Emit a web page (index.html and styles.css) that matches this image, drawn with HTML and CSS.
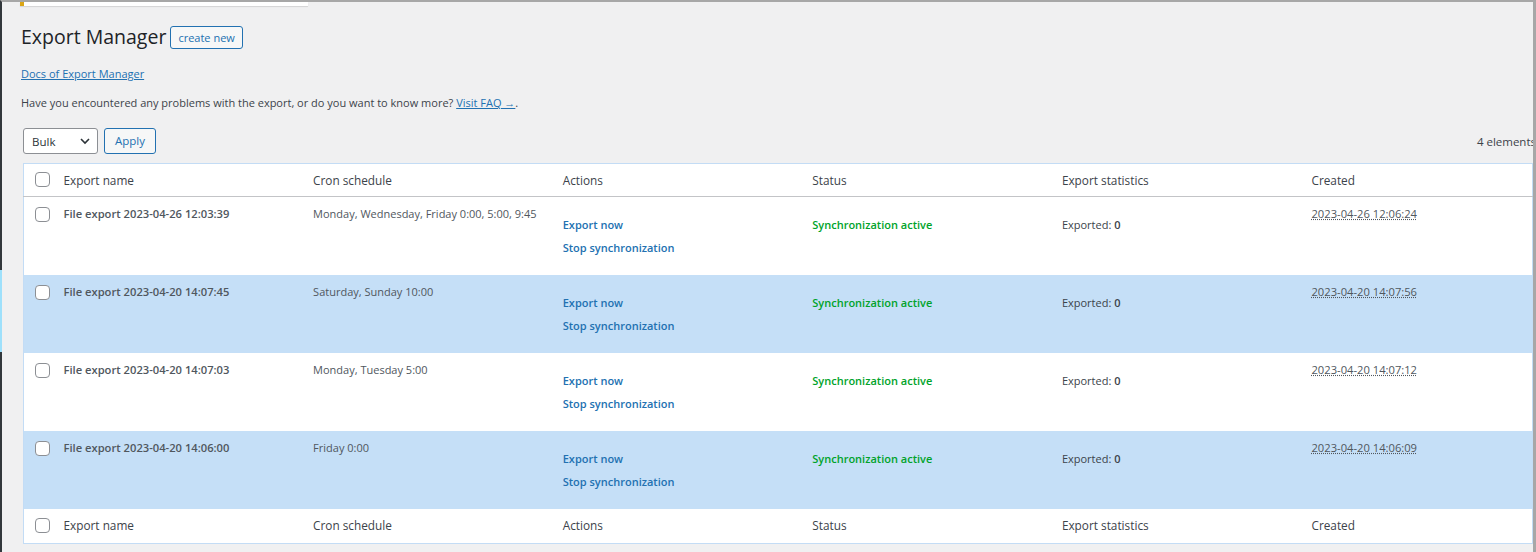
FILE: index.html
```html
<!DOCTYPE html>
<html lang="en">
<head>
    <meta charset="UTF-8">
    <meta name="viewport" content="width=device-width, initial-scale=1.0">
    <title>Export Manager</title>
    <link rel="stylesheet" href="styles.css">
</head>
<body>
    <div class="edge-mark"></div>
    <div class="frame">
        <div class="wrap">
            <div class="notice"></div>
            <div class="heading">
                <h1>Export Manager</h1>
                <a href="#" class="btn">create new</a>
            </div>
            <p class="docs"><a href="#">Docs of Export Manager</a></p>
            <p class="info">Have you encountered any problems with the export, or do you want to know more? <a href="#">Visit FAQ &rarr;</a>.</p>
            <div class="tablenav">
                <div class="bulk">
                    <div class="select">
                        <span>Bulk</span>
                        <svg width="12" height="12" viewBox="0 0 12 12"><path d="M2 4 L6 8 L10 4" fill="none" stroke="#2c3338" stroke-width="1.6"/></svg>
                    </div>
                    <a href="#" class="btn apply">Apply</a>
                </div>
                <span class="count">4 elements</span>
            </div>
            <table class="list">
                <thead>
                    <tr>
                        <td class="check"><span class="box"></span></td>
                        <th class="col">Export name</th>
                        <th class="col">Cron schedule</th>
                        <th class="col">Actions</th>
                        <th class="col">Status</th>
                        <th class="col">Export statistics</th>
                        <th>Created</th>
                    </tr>
                </thead>
                <tbody>
                    <tr>
                        <td class="check"><span class="box"></span></td>
                        <td class="name">File export 2023-04-26 12:03:39</td>
                        <td>Monday, Wednesday, Friday 0:00, 5:00, 9:45</td>
                        <td class="actions"><a href="#">Export now</a><a href="#">Stop synchronization</a></td>
                        <td class="status">Synchronization active</td>
                        <td class="stats">Exported: <b>0</b></td>
                        <td><abbr>2023-04-26 12:06:24</abbr></td>
                    </tr>
                    <tr class="hl">
                        <td class="check"><span class="box"></span></td>
                        <td class="name">File export 2023-04-20 14:07:45</td>
                        <td>Saturday, Sunday 10:00</td>
                        <td class="actions"><a href="#">Export now</a><a href="#">Stop synchronization</a></td>
                        <td class="status">Synchronization active</td>
                        <td class="stats">Exported: <b>0</b></td>
                        <td><abbr>2023-04-20 14:07:56</abbr></td>
                    </tr>
                    <tr>
                        <td class="check"><span class="box"></span></td>
                        <td class="name">File export 2023-04-20 14:07:03</td>
                        <td>Monday, Tuesday 5:00</td>
                        <td class="actions"><a href="#">Export now</a><a href="#">Stop synchronization</a></td>
                        <td class="status">Synchronization active</td>
                        <td class="stats">Exported: <b>0</b></td>
                        <td><abbr>2023-04-20 14:07:12</abbr></td>
                    </tr>
                    <tr class="hl">
                        <td class="check"><span class="box"></span></td>
                        <td class="name">File export 2023-04-20 14:06:00</td>
                        <td>Friday 0:00</td>
                        <td class="actions"><a href="#">Export now</a><a href="#">Stop synchronization</a></td>
                        <td class="status">Synchronization active</td>
                        <td class="stats">Exported: <b>0</b></td>
                        <td><abbr>2023-04-20 14:06:09</abbr></td>
                    </tr>
                </tbody>
                <tfoot>
                    <tr>
                        <td class="check"><span class="box"></span></td>
                        <th>Export name</th>
                        <th>Cron schedule</th>
                        <th>Actions</th>
                        <th>Status</th>
                        <th>Export statistics</th>
                        <th>Created</th>
                    </tr>
                </tfoot>
            </table>
        </div>
    </div>
</body>
</html>
```

FILE: styles.css
```css
* {
    margin: 0;
    padding: 0;
    box-sizing: border-box;
}
body {
    position: relative;
    background-color: #f0f0f1;
    color: #3c434a;
    font-family: 'Open Sans', sans-serif;
    font-size: 11px;
}
a {
    color: #2271b1;
}
.frame {
    height: 552px;
    border-top: 2px solid #a7a7a7;
    border-left: 2px solid #32373c;
    border-right: 3px solid #a7a7a7;
    overflow: hidden;
}
.edge-mark {
    position: absolute;
    left: 0;
    top: 270px;
    width: 2px;
    height: 82px;
    background-color: #9ee0fb;
}
.wrap {
    padding-left: 18px;
}
.notice {
    width: 288px;
    height: 4px;
    background-color: #fff;
    border-left: 4px solid #dba617;
    box-shadow: 0 1px 1px rgba(0, 0, 0, 0.12);
}
.heading {
    display: flex;
    align-items: center;
    gap: 4px;
    margin-top: 17px;
    padding-left: 1px;
}
h1 {
    font-size: 19.5px;
    font-weight: 400;
    color: #1d2327;
    line-height: 28px;
}
.btn {
    display: inline-block;
    color: #2271b1;
    border: 1px solid #2271b1;
    border-radius: 3px;
    background-color: #f6f7f7;
    text-decoration: none;
    font-size: 11px;
    line-height: 21px;
    padding: 0 7px;
}
.docs {
    margin-top: 15px;
    padding-left: 1px;
}
.info {
    margin-top: 14px;
    padding-left: 1px;
}
.tablenav {
    display: flex;
    align-items: center;
    justify-content: space-between;
    margin-top: 18px;
    padding-left: 3px;
    height: 26px;
}
.bulk {
    display: flex;
    gap: 6px;
}
.select {
    width: 75px;
    height: 26px;
    border: 1px solid #8c8f94;
    border-radius: 3px;
    background-color: #fff;
    display: flex;
    align-items: center;
    justify-content: space-between;
    padding: 0 6px 0 8px;
    color: #2c3338;
    font-size: 11.5px;
}
.apply {
    line-height: 24px;
    padding: 0 10px;
    font-size: 11.5px;
}
.count {
    margin-right: -3px;
    color: #3c434a;
    font-size: 11.5px;
}
.list {
    margin-top: 9px;
    margin-left: 3px;
    width: 1510px;
    border-collapse: collapse;
    border: 1px solid #c3dcf5;
    background-color: #fff;
    table-layout: fixed;
}
.list th, .list td {
    text-align: left;
    vertical-align: top;
    font-weight: 400;
    padding: 8px 8px;
    line-height: 16px;
}
.list thead tr {
    height: 32px;
}
.list thead th {
    padding-top: 8px;
}
.list tfoot tr {
    height: 35px;
}
.list thead th, .list thead td {
    border-bottom: 1px solid #c3c4c7;
}
.list tbody tr {
    height: 78px;
}
.list th {
    font-size: 11.8px;
    color: #3c434a;
}
.list .check {
    width: 32px;
    padding: 9px 0 0 11px;
}
.list thead .check {
    padding-top: 8px;
}
.list th.col {
    width: 249.6px;
}
.box {
    display: block;
    width: 15px;
    height: 15px;
    border: 1px solid #8c8f94;
    border-radius: 4px;
    background-color: #fff;
}
.list tbody .check {
    padding-top: 10px;
}
.list tbody td {
    color: #50575e;
    padding-top: 9px;
}
.list td.name {
    font-weight: 600;
    font-size: 11.2px;
    color: #50575e;
}
.list td.actions {
    padding-top: 20px;
}
.actions a {
    display: block;
    font-weight: 600;
    text-decoration: none;
    margin-bottom: 7px;
}
.list td.status {
    padding-top: 20px;
    color: #00a32a;
    font-weight: 600;
}
.list td.stats {
    padding-top: 20px;
    color: #3c434a;
}
.stats b {
    font-weight: 600;
}
abbr {
    text-decoration: underline dotted;
    color: #50575e;
    font-size: 11.2px;
}
.list tr.hl {
    background-color: #c5dff7;
}
```
